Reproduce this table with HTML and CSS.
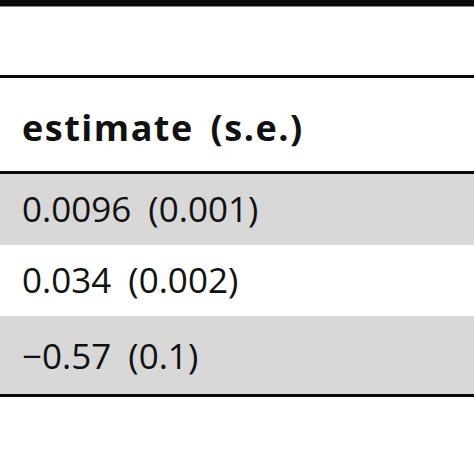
FILE: index.html
```html
<!DOCTYPE html>
<html>
<head>
<meta charset="utf-8">
<link rel="stylesheet" href="styles.css">
</head>
<body>
<div class="table">
  <div class="rule rule-top"></div>
  <div class="caption"></div>
  <div class="rule"></div>
  <div class="row head">estimate (s.e.)</div>
  <div class="rule"></div>
  <div class="row shade r1">0.0096 (0.001)</div>
  <div class="row r2">0.034 (0.002)</div>
  <div class="row shade r3">−0.57 (0.1)</div>
  <div class="rule"></div>
</div>
</body>
</html>
```
FILE: styles.css
```css
html, body {
  margin: 0;
  padding: 0;
  background: #fff;
}
.table {
  width: 474px;
  display: flex;
  flex-direction: column;
  font-family: "Open Sans", "DejaVu Sans", sans-serif;
  color: #111;
}
.rule {
  height: 3px;
  background: #0a0a0a;
}
.rule-top {
  height: 7px;
  border-bottom: 1px solid #888;
  box-sizing: border-box;
}
.caption {
  height: 68px;
}
.row {
  display: flex;
  align-items: center;
  padding-left: 22px;
  font-size: 35px;
  word-spacing: 8px;
  box-sizing: border-box;
}
.head {
  height: 93px;
  font-weight: 700;
  font-size: 36px;
  letter-spacing: 1.5px;
  word-spacing: 6px;
  padding-top: 6px;
}
.shade {
  background: #d8d8d8;
}
.r1 { height: 71px; padding-bottom: 2px; }
.r2 { height: 71px; padding-bottom: 2px; }
.r3 { height: 78px; }
```
